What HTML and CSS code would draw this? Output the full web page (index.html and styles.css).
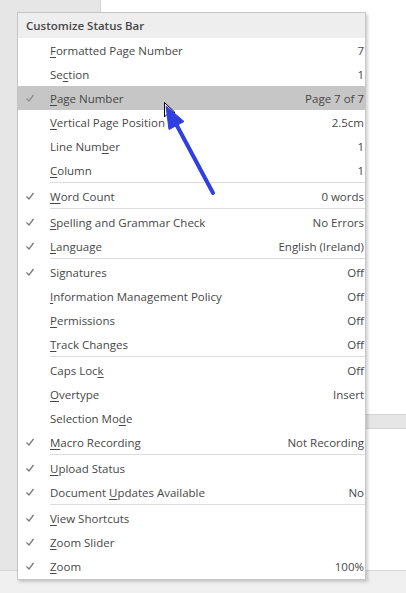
FILE: index.html
```html
<!DOCTYPE html>
<html>
<head>
<meta charset="utf-8">
<link rel="stylesheet" href="styles.css">
</head>
<body>
<div class="screen">
  <div class="workspace">
    <div class="side"></div>
    <div class="doc">
      <div class="doc-space"></div>
      <div class="doc-band"></div>
    </div>
  </div>
  <div class="statusbar"></div>

  <div class="menu">
    <div class="menu-title">Customize Status Bar</div>
    <div class="row"><span class="chk"></span><span class="lbl"><u>F</u>ormatted Page Number</span><span class="val">7</span></div>
    <div class="row"><span class="chk"></span><span class="lbl">Se<u>c</u>tion</span><span class="val">1</span></div>
    <div class="row hot"><span class="chk on"><svg viewBox="0 0 10 10"><path d="M1.5 5.5 L4 8 L8.5 2"/></svg></span><span class="lbl"><u>P</u>age Number</span><span class="val">Page 7 of 7</span></div>
    <div class="row"><span class="chk"></span><span class="lbl"><u>V</u>ertical Page Position</span><span class="val">2.5cm</span></div>
    <div class="row"><span class="chk"></span><span class="lbl">Line Num<u>b</u>er</span><span class="val">1</span></div>
    <div class="row"><span class="chk"></span><span class="lbl"><u>C</u>olumn</span><span class="val">1</span></div>
    <div class="sep"></div>
    <div class="row"><span class="chk on"><svg viewBox="0 0 10 10"><path d="M1.5 5.5 L4 8 L8.5 2"/></svg></span><span class="lbl"><u>W</u>ord Count</span><span class="val">0 words</span></div>
    <div class="sep"></div>
    <div class="row"><span class="chk on"><svg viewBox="0 0 10 10"><path d="M1.5 5.5 L4 8 L8.5 2"/></svg></span><span class="lbl"><u>S</u>pelling and Grammar Check</span><span class="val">No Errors</span></div>
    <div class="row"><span class="chk on"><svg viewBox="0 0 10 10"><path d="M1.5 5.5 L4 8 L8.5 2"/></svg></span><span class="lbl"><u>L</u>anguage</span><span class="val">English (Ireland)</span></div>
    <div class="sep"></div>
    <div class="row"><span class="chk on"><svg viewBox="0 0 10 10"><path d="M1.5 5.5 L4 8 L8.5 2"/></svg></span><span class="lbl">Signatures</span><span class="val">Off</span></div>
    <div class="row"><span class="chk"></span><span class="lbl"><u>I</u>nformation Management Policy</span><span class="val">Off</span></div>
    <div class="row"><span class="chk"></span><span class="lbl"><u>P</u>ermissions</span><span class="val">Off</span></div>
    <div class="row"><span class="chk"></span><span class="lbl"><u>T</u>rack Changes</span><span class="val">Off</span></div>
    <div class="sep"></div>
    <div class="row"><span class="chk"></span><span class="lbl">Caps Loc<u>k</u></span><span class="val">Off</span></div>
    <div class="row"><span class="chk"></span><span class="lbl"><u>O</u>vertype</span><span class="val">Insert</span></div>
    <div class="row"><span class="chk"></span><span class="lbl">Selection Mo<u>d</u>e</span><span class="val"></span></div>
    <div class="row"><span class="chk on"><svg viewBox="0 0 10 10"><path d="M1.5 5.5 L4 8 L8.5 2"/></svg></span><span class="lbl"><u>M</u>acro Recording</span><span class="val">Not Recording</span></div>
    <div class="sep"></div>
    <div class="row"><span class="chk on"><svg viewBox="0 0 10 10"><path d="M1.5 5.5 L4 8 L8.5 2"/></svg></span><span class="lbl"><u>U</u>pload Status</span><span class="val"></span></div>
    <div class="row"><span class="chk on"><svg viewBox="0 0 10 10"><path d="M1.5 5.5 L4 8 L8.5 2"/></svg></span><span class="lbl">Document <u>U</u>pdates Available</span><span class="val">No</span></div>
    <div class="sep"></div>
    <div class="row"><span class="chk on"><svg viewBox="0 0 10 10"><path d="M1.5 5.5 L4 8 L8.5 2"/></svg></span><span class="lbl"><u>V</u>iew Shortcuts</span><span class="val"></span></div>
    <div class="row"><span class="chk on"><svg viewBox="0 0 10 10"><path d="M1.5 5.5 L4 8 L8.5 2"/></svg></span><span class="lbl"><u>Z</u>oom Slider</span><span class="val"></span></div>
    <div class="row"><span class="chk on"><svg viewBox="0 0 10 10"><path d="M1.5 5.5 L4 8 L8.5 2"/></svg></span><span class="lbl"><u>Z</u>oom</span><span class="val">100%</span></div>
  </div>

  <svg class="overlay" width="406" height="593" viewBox="0 0 406 593">
    <path class="cursor" d="M164.5 102.5 L164.5 117 L168 113.5 L170.5 119 L172.5 118 L170 112.5 L175 112.5 Z"/>
    <line class="arrow-line" x1="213" y1="193" x2="175" y2="122"/>
    <path class="arrow-head" d="M166 106 L184 121.5 L169 129.5 Z"/>
  </svg>
</div>
</body>
</html>
```
FILE: styles.css
```css
html, body {
  margin: 0;
  padding: 0;
}
body {
  width: 406px;
  height: 593px;
  overflow: hidden;
  font-family: "Open Sans", "Noto Sans", sans-serif;
}
.screen {
  position: relative;
  width: 406px;
  height: 593px;
  display: flex;
  flex-direction: column;
}
.workspace {
  display: flex;
  height: 570px;
}
.side {
  width: 100px;
  background: #e6e6e6;
  border-right: 1px solid #d4d4d4;
}
.doc {
  flex: 1;
  background: #ffffff;
  display: flex;
  flex-direction: column;
}
.doc-space {
  height: 414px;
}
.doc-band {
  height: 13px;
  background: #e6e6e6;
  border-top: 1px solid #d6d6d6;
  border-bottom: 1px solid #d6d6d6;
}
.statusbar {
  flex: 1;
  background: #f0f0f0;
  border-top: 1px solid #d4d4d4;
}
.menu {
  position: absolute;
  left: 17px;
  top: 12px;
  width: 347px;
  background: #ffffff;
  border: 1px solid #c6c6c6;
  box-shadow: 2px 2px 3px rgba(0, 0, 0, 0.18);
  padding-bottom: 1px;
  color: #474747;
  font-size: 11.5px;
}
.menu-title {
  height: 25px;
  line-height: 25px;
  background: #eeeeee;
  font-weight: 600;
  font-size: 11.5px;
  padding-left: 8px;
  color: #474747;
}
.row {
  height: 24px;
  display: flex;
  align-items: center;
}
.row.hot {
  background: #c6c6c6;
}
.chk {
  width: 32px;
  height: 24px;
  display: flex;
  align-items: center;
  justify-content: center;
  flex: none;
}
.chk svg {
  width: 10px;
  height: 10px;
  margin-left: -9px;
  fill: none;
  stroke: #7a7a7a;
  stroke-width: 1.3;
}
.hot .chk svg {
  stroke: #8e8e8e;
}
.lbl {
  flex: 1;
  white-space: nowrap;
}
.lbl u {
  text-decoration-thickness: 1px;
  text-underline-offset: 2px;
}
.val {
  padding-right: 1px;
  white-space: nowrap;
}
.sep {
  height: 1px;
  background: #dcdcdc;
  margin-left: 32px;
  margin-bottom: 1px;
}
.overlay {
  position: absolute;
  left: 0;
  top: 0;
  pointer-events: none;
}
.cursor {
  fill: #ffffff;
  stroke: #000000;
  stroke-width: 1;
}
.arrow-line {
  stroke: #2f3fe0;
  stroke-width: 4;
  stroke-linecap: round;
}
.arrow-head {
  fill: #2f3fe0;
  stroke: #2f3fe0;
  stroke-width: 1;
  stroke-linejoin: round;
}
```
